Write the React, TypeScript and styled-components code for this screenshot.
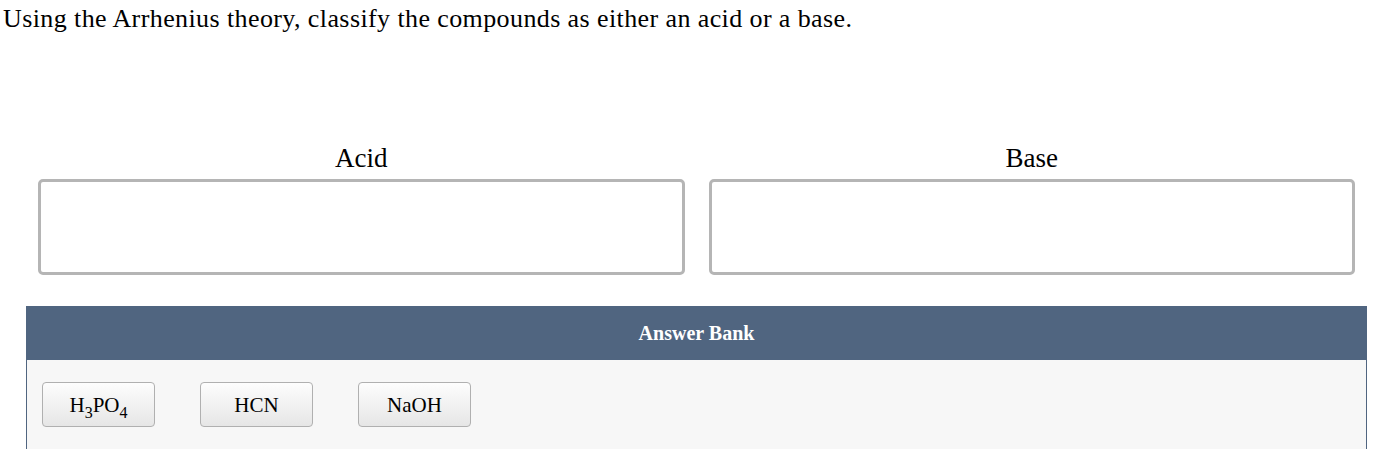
import React from 'react';
import styled, { createGlobalStyle } from 'styled-components';

const GlobalStyle = createGlobalStyle`
  body {
    margin: 0;
    background: #fff;
    font-family: "Liberation Serif", "Times New Roman", serif;
    color: #000;
  }
`;

const Prompt = styled.p`
  margin: 0;
  padding: 4px 0 0 3px;
  font-size: 26px;
  line-height: 30px;
  letter-spacing: 0.4px;
`;

const Board = styled.div`
  margin: 109px 12px 0 26px;
`;

const Columns = styled.div`
  display: grid;
  grid-template-columns: 1fr 1fr;
`;

const Column = styled.div`
  display: flex;
  flex-direction: column;
  padding: 0 12px;
`;

const ColumnTitle = styled.div`
  text-align: center;
  font-size: 27px;
  line-height: 30px;
  margin-bottom: 6px;
`;

const DropZone = styled.div`
  height: 90px;
  border: 3px solid #b5b5b5;
  border-radius: 5px;
  background: #fff;
`;

const Bank = styled.div`
  margin-top: 31px;
  border: 1px solid #506580;
  border-bottom: none;
`;

const BankHeader = styled.div`
  height: 53px;
  background: #506580;
  color: #fff;
  display: flex;
  align-items: center;
  justify-content: center;
  font-size: 20px;
  font-weight: bold;
`;

const BankBody = styled.div`
  background: #f7f7f7;
  display: flex;
  gap: 45px;
  padding: 22px 15px 30px;
`;

const Tile = styled.div`
  width: 111px;
  height: 43px;
  border: 1px solid #b0b0b0;
  border-radius: 4px;
  background: linear-gradient(#fdfdfd, #e6e6e6);
  display: flex;
  align-items: center;
  justify-content: center;
`;

const Formula = styled.span`
  font-size: 21px;
  line-height: 24px;

  sub {
    font-size: 16px;
    line-height: 0;
    vertical-align: -6px;
  }
`;

export default function App() {
  return (
    <>
      <GlobalStyle />
      <Prompt>Using the Arrhenius theory, classify the compounds as either an acid or a base.</Prompt>
      <Board>
        <Columns>
          <Column>
            <ColumnTitle>Acid</ColumnTitle>
            <DropZone />
          </Column>
          <Column>
            <ColumnTitle>Base</ColumnTitle>
            <DropZone />
          </Column>
        </Columns>
        <Bank>
          <BankHeader>Answer Bank</BankHeader>
          <BankBody>
            <Tile><Formula>H<sub>3</sub>PO<sub>4</sub></Formula></Tile>
            <Tile><Formula>HCN</Formula></Tile>
            <Tile><Formula>NaOH</Formula></Tile>
          </BankBody>
        </Bank>
      </Board>
    </>
  );
}
